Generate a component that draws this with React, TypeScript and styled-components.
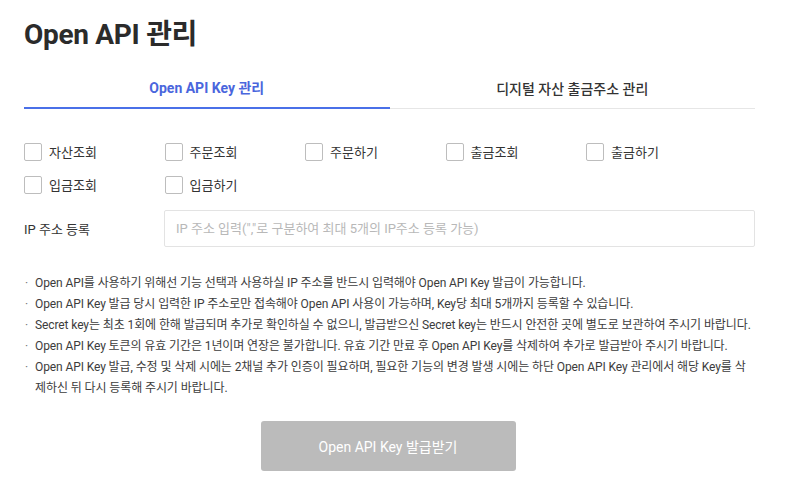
import { useState } from "react";
import styled, { createGlobalStyle } from "styled-components";

const GlobalStyle = createGlobalStyle`
  html, body {
    margin: 0;
    padding: 0;
    background: #ffffff;
  }
  body {
    font-family: Roboto, "Noto Sans CJK KR", sans-serif;
    color: #333333;
  }
`;

const Page = styled.div`
  width: 731px;
  padding: 17px 0 0 24px;
`;

const Title = styled.h1`
  margin: 0;
  font-size: 28px;
  font-weight: 700;
  line-height: 36px;
  color: #2b2b2b;
  letter-spacing: -0.3px;
`;

const Tabs = styled.div`
  display: grid;
  grid-template-columns: 1fr 1fr;
  align-items: end;
  margin-top: 18px;
`;

const Tab = styled.button<{ $active?: boolean }>`
  height: ${(p) => (p.$active ? "38px" : "37px")};
  padding: 0 0 4px;
  border: none;
  background: none;
  font-family: inherit;
  font-size: 14px;
  font-weight: ${(p) => (p.$active ? 700 : 500)};
  color: ${(p) => (p.$active ? "#4a66dd" : "#333333")};
  border-bottom: ${(p) => (p.$active ? "2px solid #4a70e8" : "1px solid #e6e6e6")};
  cursor: pointer;
`;

const CheckGrid = styled.div`
  display: grid;
  grid-template-columns: repeat(5, 140.5px);
  row-gap: 14px;
  margin-top: 33px;
`;

const CheckItem = styled.label`
  display: flex;
  align-items: center;
  gap: 7px;
  height: 19px;
  font-size: 13px;
  color: #333333;
  cursor: pointer;
`;

const Box = styled.span<{ $checked?: boolean }>`
  box-sizing: border-box;
  width: 18px;
  height: 18px;
  border: 1px solid #bdbdbd;
  border-radius: 2px;
  background: ${(p) => (p.$checked ? "#4a70e8" : "#ffffff")};
`;

const IpRow = styled.div`
  display: grid;
  grid-template-columns: 140px 1fr;
  align-items: center;
  margin-top: 16px;
`;

const IpLabel = styled.span`
  font-size: 13px;
  color: #333333;
`;

const IpInput = styled.input`
  box-sizing: border-box;
  height: 37px;
  width: 100%;
  border: 1px solid #e3e3e3;
  border-radius: 2px;
  padding: 0 11px;
  font-family: inherit;
  font-size: 13px;
  color: #333333;
  outline: none;
  &::placeholder {
    color: #b8b8b8;
  }
`;

const Notes = styled.ul`
  list-style: none;
  margin: 26px 0 0;
  padding: 0;
`;

const Note = styled.li`
  position: relative;
  padding-left: 11px;
  font-size: 12px;
  line-height: 21px;
  color: #3c3c3c;
  letter-spacing: -0.1px;
  &::before {
    content: "·";
    position: absolute;
    left: 1px;
    top: 0;
    color: #777777;
  }
`;

const ButtonRow = styled.div`
  display: flex;
  justify-content: center;
  margin-top: 22px;
  padding-right: 3px;
`;

const IssueButton = styled.button`
  width: 255px;
  height: 50px;
  border: none;
  border-radius: 3px;
  background: #bbbbbb;
  color: #ffffff;
  font-family: inherit;
  font-size: 14px;
  font-weight: 400;
`;

const permissions = ["자산조회", "주문조회", "주문하기", "출금조회", "출금하기", "입금조회", "입금하기"];

const notes = [
  "Open API를 사용하기 위해선 기능 선택과 사용하실 IP 주소를 반드시 입력해야 Open API Key 발급이 가능합니다.",
  "Open API Key 발급 당시 입력한 IP 주소로만 접속해야 Open API 사용이 가능하며, Key당 최대 5개까지 등록할 수 있습니다.",
  "Secret key는 최초 1회에 한해 발급되며 추가로 확인하실 수 없으니, 발급받으신 Secret key는 반드시 안전한 곳에 별도로 보관하여 주시기 바랍니다.",
  "Open API Key 토큰의 유효 기간은 1년이며 연장은 불가합니다. 유효 기간 만료 후 Open API Key를 삭제하여 추가로 발급받아 주시기 바랍니다.",
  "Open API Key 발급, 수정 및 삭제 시에는 2채널 추가 인증이 필요하며, 필요한 기능의 변경 발생 시에는 하단 Open API Key 관리에서 해당 Key를 삭제하신 뒤 다시 등록해 주시기 바랍니다.",
];

export default function App() {
  const [tab, setTab] = useState(0);
  const [checked, setChecked] = useState<Record<string, boolean>>({});

  return (
    <Page>
      <GlobalStyle />
      <Title>Open API 관리</Title>
      <Tabs>
        <Tab $active={tab === 0} onClick={() => setTab(0)}>
          Open API Key 관리
        </Tab>
        <Tab $active={tab === 1} onClick={() => setTab(1)}>
          디지털 자산 출금주소 관리
        </Tab>
      </Tabs>
      <CheckGrid>
        {permissions.map((p) => (
          <CheckItem key={p} onClick={() => setChecked({ ...checked, [p]: !checked[p] })}>
            <Box $checked={checked[p]} />
            {p}
          </CheckItem>
        ))}
      </CheckGrid>
      <IpRow>
        <IpLabel>IP 주소 등록</IpLabel>
        <IpInput placeholder={'IP 주소 입력(","로 구분하여 최대 5개의 IP주소 등록 가능)'} />
      </IpRow>
      <Notes>
        {notes.map((n) => (
          <Note key={n}>{n}</Note>
        ))}
      </Notes>
      <ButtonRow>
        <IssueButton disabled>Open API Key 발급받기</IssueButton>
      </ButtonRow>
    </Page>
  );
}
